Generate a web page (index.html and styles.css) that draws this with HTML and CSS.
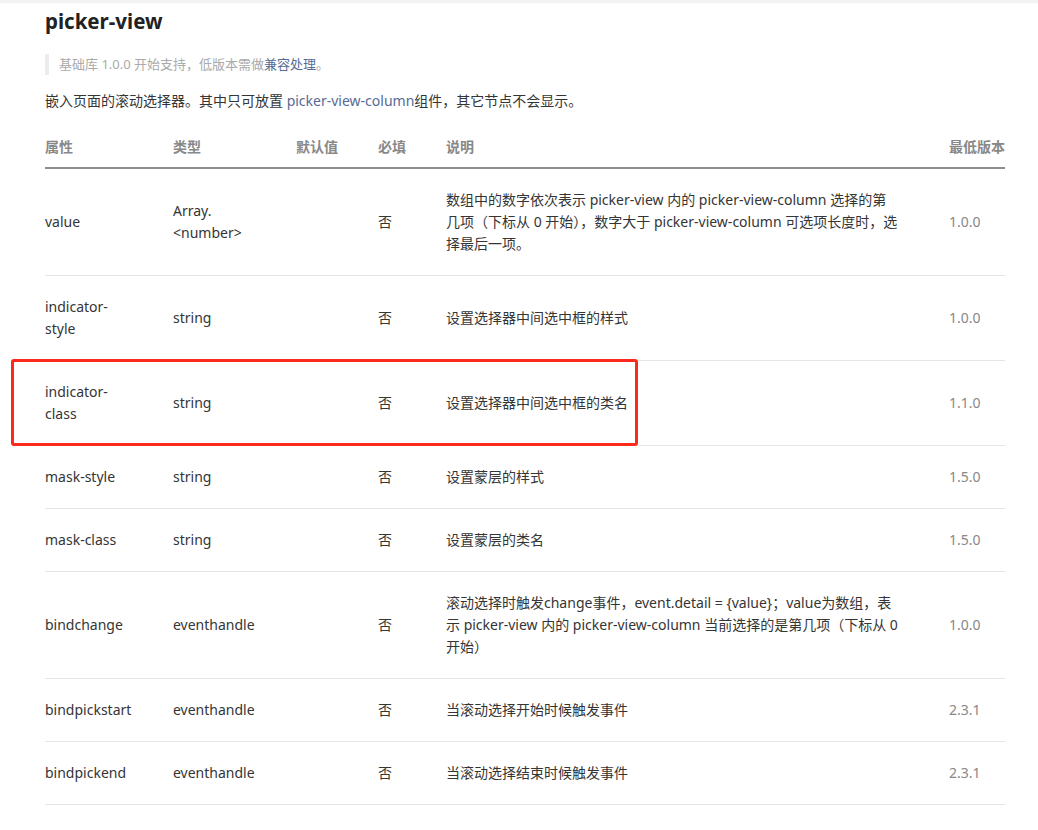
FILE: index.html
```html
<!DOCTYPE html>
<html lang="zh-CN">
<head>
<meta charset="utf-8">
<title>picker-view</title>
<link rel="stylesheet" href="styles.css">
</head>
<body>
<div class="topbar"></div>
<main class="content">
  <h1 class="title">picker-view</h1>
  <blockquote class="note">基础库 1.0.0 开始支持，低版本需做<a class="link" href="#">兼容处理</a>。</blockquote>
  <p class="intro">嵌入页面的滚动选择器。其中只可放置 <a class="link" href="#">picker-view-column</a>组件，其它节点不会显示。</p>
  <div class="table-wrap">
    <table class="props">
      <colgroup>
        <col class="c-name"><col class="c-type"><col class="c-def"><col class="c-req"><col class="c-desc"><col class="c-ver">
      </colgroup>
      <thead>
        <tr><th>属性</th><th>类型</th><th>默认值</th><th>必填</th><th>说明</th><th>最低版本</th></tr>
      </thead>
      <tbody>
        <tr><td>value</td><td>Array.<wbr>&lt;number&gt;</td><td></td><td>否</td><td>数组中的数字依次表示 picker-view 内的 picker-view-column 选择的第几项（下标从 0 开始），数字大于 picker-view-column 可选项长度时，选择最后一项。</td><td class="ver">1.0.0</td></tr>
        <tr><td>indicator-style</td><td>string</td><td></td><td>否</td><td>设置选择器中间选中框的样式</td><td class="ver">1.0.0</td></tr>
        <tr><td>indicator-class</td><td>string</td><td></td><td>否</td><td>设置选择器中间选中框的类名</td><td class="ver">1.1.0</td></tr>
        <tr><td>mask-style</td><td>string</td><td></td><td>否</td><td>设置蒙层的样式</td><td class="ver">1.5.0</td></tr>
        <tr><td>mask-class</td><td>string</td><td></td><td>否</td><td>设置蒙层的类名</td><td class="ver">1.5.0</td></tr>
        <tr><td>bindchange</td><td>eventhandle</td><td></td><td>否</td><td>滚动选择时触发change事件，event.detail = {value}；value为数组，表示 picker-view 内的 picker-view-column 当前选择的是第几项（下标从 0 开始）</td><td class="ver">1.0.0</td></tr>
        <tr><td>bindpickstart</td><td>eventhandle</td><td></td><td>否</td><td>当滚动选择开始时候触发事件</td><td class="ver">2.3.1</td></tr>
        <tr><td>bindpickend</td><td>eventhandle</td><td></td><td>否</td><td>当滚动选择结束时候触发事件</td><td class="ver">2.3.1</td></tr>
      </tbody>
    </table>
    <div class="highlight"></div>
  </div>
</main>
</body>
</html>
```

FILE: styles.css
```css
html, body {
  margin: 0;
  padding: 0;
  background: #fff;
}
body {
  font-family: "Noto Sans", "Noto Sans CJK SC", sans-serif;
  font-size: 14px;
  line-height: 22px;
  color: #353535;
}
.topbar {
  height: 3px;
  background: #f2f2f2;
}
.content {
  padding-left: 45px;
  width: 960px;
}
.title {
  margin: 4px 0 0;
  font-size: 20.5px;
  line-height: 28px;
  font-weight: 700;
  color: #222;
}
.note {
  margin: 19px 0 0;
  padding-left: 10px;
  border-left: 4px solid #ececec;
  font-size: 13px;
  line-height: 21px;
  color: #aaa;
}
.link {
  color: #576b95;
  text-decoration: none;
}
.intro {
  margin: 15px 0 0;
}
.table-wrap {
  position: relative;
  margin-top: 14px;
}
.props {
  width: 960px;
  border-collapse: collapse;
  table-layout: fixed;
}
.c-name { width: 128px; }
.c-type { width: 123px; }
.c-def { width: 82px; }
.c-req { width: 68px; }
.c-desc { width: 503px; }
.c-ver { width: 56px; }
.props th {
  text-align: left;
  font-weight: 700;
  color: #888;
  padding: 10px 30px 9px 0;
  border-bottom: 2px solid #8d8d8d;
  vertical-align: middle;
  white-space: nowrap;
}
.props td {
  padding: 20px 30px 20px 0;
  border-bottom: 1px solid #e5e5e5;
  vertical-align: middle;
}
.props td:first-child {
  padding-right: 40px;
}
.props td:nth-child(5) {
  padding-right: 50px;
}
.props th:last-child,
.props td:last-child {
  padding-right: 0;
}
.ver {
  color: #888;
}
.highlight {
  position: absolute;
  left: -34px;
  top: 233px;
  width: 621px;
  height: 81px;
  border: 3px solid #fb2a1d;
  border-radius: 3px;
}
```
